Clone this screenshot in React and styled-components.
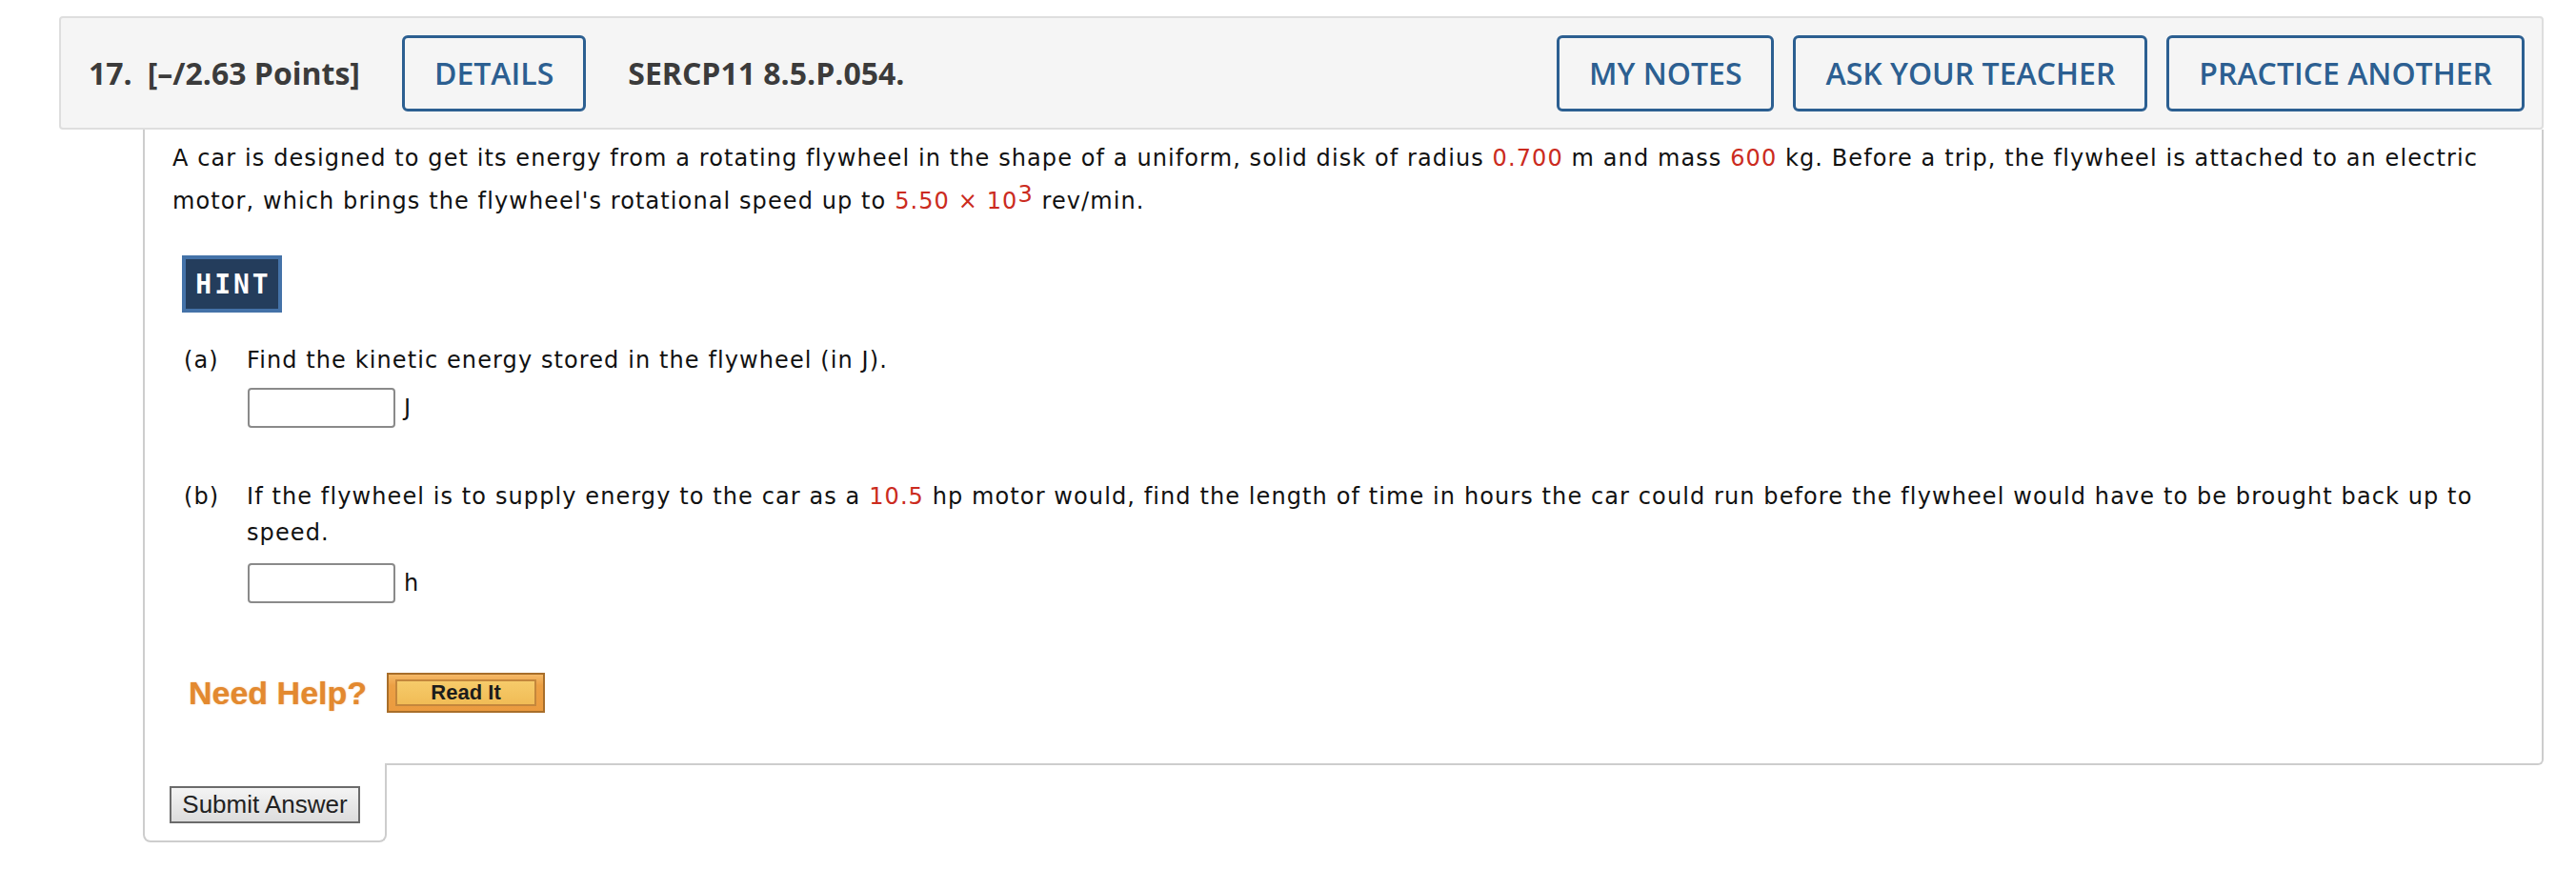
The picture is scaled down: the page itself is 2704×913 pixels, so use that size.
import React from 'react';
import styled, { createGlobalStyle } from 'styled-components';

const Global = createGlobalStyle`
  html, body { margin: 0; padding: 0; background: #ffffff; }
  body { font-family: "DejaVu Sans", Verdana, sans-serif; }
`;

const Page = styled.div`
  padding: 17px 34px 0 62px;
`;

const Header = styled.header`
  display: flex;
  align-items: center;
  height: 119px;
  box-sizing: border-box;
  background: #f5f5f5;
  border: 2px solid #dedede;
  border-radius: 4px;
  padding: 0 18px 0 29px;
  font-family: "Open Sans", sans-serif;
  color: #3b3b3b;
  gap: 44px;
`;

const Heading = styled.span`
  font-size: 32px;
  font-weight: 700;
  white-space: nowrap;
`;

const Num = styled.span`
  margin-right: 16px;
`;

const Spacer = styled.div`
  flex: 1;
`;

const Actions = styled.div`
  display: flex;
  gap: 20px;
`;

const HeadButton = styled.button`
  height: 80px;
  box-sizing: border-box;
  padding: 0 31px;
  border: 3px solid #2c5f91;
  border-radius: 6px;
  background: transparent;
  color: #2c5f91;
  font-family: "Open Sans", sans-serif;
  font-size: 32px;
  font-weight: 600;
  white-space: nowrap;
`;

const Panel = styled.section`
  margin-left: 88px;
  border: 2px solid #cdcdcd;
  border-top: none;
  border-radius: 0 0 6px 0;
  padding: 8px 28px 53px 29px;
  font-size: 24px;
  color: #111;
`;

const Intro = styled.p`
  margin: 0;
  line-height: 45px;
  letter-spacing: 1.1px;
`;

const Red = styled.span`
  color: #cb2b20;
`;

const Sup = styled.span`
  vertical-align: 7px;
  line-height: 0;
`;

const Hint = styled.button`
  margin: 34px 0 0 10px;
  width: 105px;
  height: 60px;
  box-sizing: border-box;
  border: 4px solid #4472a8;
  background: #243d5c;
  color: #fff;
  font-family: "DejaVu Sans Mono", monospace;
  font-weight: 700;
  font-size: 28px;
  letter-spacing: 3px;
  padding: 0 0 0 3px;
  display: block;
`;

const Part = styled.div`
  display: grid;
  grid-template-columns: 66px 1fr;
  margin: ${p => p.$top}px 0 0 12px;
  line-height: 38px;
  letter-spacing: 1.1px;
`;

const Label = styled.span``;

const Body = styled.div``;

const AnswerRow = styled.div`
  display: flex;
  align-items: center;
  gap: 9px;
  margin-top: ${p => p.$top}px;
  margin-left: 1px;
`;

const Field = styled.input`
  width: 155px;
  height: 42px;
  box-sizing: border-box;
  border: 2px solid #8a8a8a;
  border-radius: 4px;
  background: #fff;
  padding: 0;
`;

const Unit = styled.span`
  font-size: 24px;
  line-height: 42px;
`;

const HelpRow = styled.div`
  display: flex;
  align-items: center;
  gap: 21px;
  margin: 73px 0 0 17px;
`;

const NeedHelp = styled.span`
  font-family: "Liberation Sans", Arial, sans-serif;
  font-weight: 700;
  font-size: 34px;
  color: #e3892f;
  text-shadow: 0 0 1.5px rgba(227, 137, 47, 0.7);
`;

const ReadIt = styled.button`
  display: flex;
  width: 166px;
  height: 42px;
  box-sizing: border-box;
  padding: 5px 7px 5px 7px;
  border: 2px solid #a86e2a;
  background: linear-gradient(#f5b968, #eca044 30%, #eb9b3f);
`;

const ReadItFace = styled.span`
  flex: 1;
  display: flex;
  align-items: center;
  justify-content: center;
  border: 2px solid #c4873c;
  background: linear-gradient(#f6cb6a, #f1bc56);
  font-family: "Liberation Sans", Arial, sans-serif;
  font-weight: 700;
  font-size: 22px;
  color: #1c1c1c;
`;

const Tab = styled.div`
  margin: -2px 0 0 88px;
  width: 256px;
  box-sizing: border-box;
  position: relative;
  background: #fff;
  border: 2px solid #cdcdcd;
  border-top: none;
  border-radius: 0 0 8px 8px;
  padding: 24px 0 18px 26px;
`;

const Submit = styled.button`
  display: block;
  width: 200px;
  height: 39px;
  box-sizing: border-box;
  border: 2px solid #6b6b6b;
  background: linear-gradient(#f4f4f4, #dcdcdc);
  font-family: "Liberation Sans", Arial, sans-serif;
  font-size: 26px;
  color: #222;
  padding: 0;
`;

export default function App() {
  return (
    <Page>
      <Global />
      <Header>
        <Heading><Num>17.</Num>[–/2.63 Points]</Heading>
        <HeadButton>DETAILS</HeadButton>
        <Heading>SERCP11 8.5.P.054.</Heading>
        <Spacer />
        <Actions>
          <HeadButton>MY NOTES</HeadButton>
          <HeadButton>ASK YOUR TEACHER</HeadButton>
          <HeadButton>PRACTICE ANOTHER</HeadButton>
        </Actions>
      </Header>
      <Panel>
        <Intro>
          A car is designed to get its energy from a rotating flywheel in the shape of a uniform, solid disk of radius{' '}
          <Red>0.700</Red> m and mass <Red>600</Red> kg. Before a trip, the flywheel is attached to an electric motor,
          which brings the flywheel's rotational speed up to <Red>5.50 × 10<Sup>3</Sup></Red> rev/min.
        </Intro>
        <Hint>HINT</Hint>
        <Part $top={31}>
          <Label>(a)</Label>
          <Body>
            Find the kinetic energy stored in the flywheel (in J).
            <AnswerRow $top={10}>
              <Field type="text" />
              <Unit>J</Unit>
            </AnswerRow>
          </Body>
        </Part>
        <Part $top={53}>
          <Label>(b)</Label>
          <Body>
            If the flywheel is to supply energy to the car as a <Red>10.5</Red> hp motor would, find the length of time
            in hours the car could run before the flywheel would have to be brought back up to speed.
            <AnswerRow $top={13}>
              <Field type="text" />
              <Unit>h</Unit>
            </AnswerRow>
          </Body>
        </Part>
        <HelpRow>
          <NeedHelp>Need Help?</NeedHelp>
          <ReadIt><ReadItFace>Read It</ReadItFace></ReadIt>
        </HelpRow>
      </Panel>
      <Tab>
        <Submit>Submit Answer</Submit>
      </Tab>
    </Page>
  );
}
